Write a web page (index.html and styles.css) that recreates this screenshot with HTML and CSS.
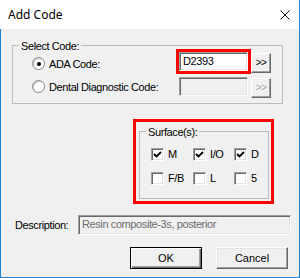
FILE: index.html
```html
<!DOCTYPE html>
<html lang="en">
<head>
    <meta charset="UTF-8">
    <title>Add Code</title>
    <link rel="stylesheet" href="styles.css">
</head>
<body>
    <div class="window">
        <div class="titlebar">
            <span class="title">Add Code</span>
            <svg class="close" width="10" height="10" viewBox="0 0 10 10">
                <path d="M0.5 0.5 L9.5 9.5 M9.5 0.5 L0.5 9.5" stroke="#000" stroke-width="1" fill="none"/>
            </svg>
        </div>

        <div class="client">
            <fieldset class="group select-group">
                <legend>Select Code:</legend>
                <div class="code-rows">
                    <div class="code-row">
                        <label class="option"><span class="radio checked"></span>ADA Code:</label>
                        <span class="mark"><span class="textbox">D2393</span></span>
                        <button class="more">&gt;&gt;</button>
                    </div>
                    <div class="code-row">
                        <label class="option"><span class="radio"></span>Dental Diagnostic Code:</label>
                        <span class="mark off"><span class="textbox disabled"></span></span>
                        <button class="more" disabled>&gt;&gt;</button>
                    </div>
                </div>
            </fieldset>

            <div class="mark surface-mark">
                <fieldset class="group surface-group">
                    <legend>Surface(s):</legend>
                    <div class="checks">
                        <label class="check"><span class="box checked"></span>M</label>
                        <label class="check"><span class="box checked"></span>I/O</label>
                        <label class="check"><span class="box checked"></span>D</label>
                        <label class="check"><span class="box"></span>F/B</label>
                        <label class="check"><span class="box"></span>L</label>
                        <label class="check"><span class="box"></span>5</label>
                    </div>
                </fieldset>
            </div>

            <div class="desc-row">
                <span class="desc-label">Description:</span>
                <span class="textbox wide">Resin composite-3s, posterior</span>
            </div>

            <div class="buttons">
                <button class="btn default">OK</button>
                <button class="btn">Cancel</button>
            </div>
        </div>
    </div>
</body>
</html>
```

FILE: styles.css
```css
* {
    box-sizing: border-box;
}

body {
    margin: 0;
    font-family: "Liberation Sans", Arial, sans-serif;
    font-size: 11px;
    letter-spacing: -0.4px;
    color: #000;
}

.window {
    width: 300px;
    height: 278px;
    display: flex;
    flex-direction: column;
    background-color: #fff;
    border-right: 1px solid #1883d7;
    border-bottom: 1px solid #1883d7;
}

.titlebar {
    height: 29px;
    display: flex;
    align-items: center;
    justify-content: space-between;
    padding: 0 9px 0 8px;
    background-color: #fff;
}

.title {
    font-family: "Noto Sans", sans-serif;
    font-size: 12px;
    letter-spacing: 0;
}

.close {
    display: block;
}

.client {
    flex: 1;
    background-color: #f0f0f0;
    border-left: 1px solid #1883d7;
    padding-top: 9px;
}

/* group boxes */
.group {
    margin: 0;
    padding: 0;
    min-width: 0;
    border: 1px solid #bcbcbc;
}

.group legend {
    margin-left: 6px;
    padding: 3px 2px 0;
    line-height: 11px;
}

.select-group {
    margin-left: 11px;
    width: 271px;
}

.code-rows {
    margin-top: -3px;
    padding: 0 11px 4px 19px;
}

.code-row {
    display: flex;
    align-items: center;
    height: 25px;
}

.option {
    flex: 1;
    display: flex;
    align-items: center;
}

.code-row:first-child .option {
    padding-top: 4px;
}

.radio {
    width: 13px;
    height: 13px;
    margin-right: 4px;
    border-radius: 50%;
    background-color: #fff;
    border: 1px solid #888;
    box-shadow: inset 1px 1px #c8c8c8;
    display: flex;
    align-items: center;
    justify-content: center;
}

.radio.checked::after {
    content: "";
    width: 4px;
    height: 4px;
    border-radius: 50%;
    background-color: #000;
}

/* red annotation frames */
.mark {
    display: block;
    border: 3px solid #f00;
}

.mark.off {
    border-color: transparent;
}

.textbox {
    display: block;
    width: 69px;
    height: 19px;
    padding: 2px 3px;
    line-height: 13px;
    background-color: #fff;
    border: 1px solid;
    border-color: #a0a0a0 #fff #fff #a0a0a0;
    box-shadow: inset 1px 1px #696969, inset -1px -1px #e3e3e3;
    white-space: nowrap;
}

.textbox.disabled {
    background-color: #f0f0f0;
}

.more {
    width: 20px;
    height: 20px;
    margin-top: 2px;
    padding: 0;
    font: inherit;
    font-size: 10px;
    letter-spacing: -0.5px;
    color: #000;
    background-color: #f0f0f0;
    border: 1px solid;
    border-color: #fff #696969 #696969 #fff;
    box-shadow: inset -1px -1px #a0a0a0;
}

.more:disabled {
    color: #a0a0a0;
    text-shadow: 1px 1px #fff;
}

/* surfaces */
.surface-mark {
    width: 141px;
    margin: 15px 0 0 132px;
    padding: 2px 2px 2px 3px;
}

.checks {
    display: grid;
    grid-template-columns: 42px 41px auto;
    grid-auto-rows: 24px;
    align-items: center;
    padding: 4px 0 8px 11px;
}

.check {
    display: flex;
    align-items: center;
}

.box {
    width: 13px;
    height: 13px;
    margin-right: 4px;
    background-color: #fff;
    border: 1px solid;
    border-color: #a0a0a0 #fff #fff #a0a0a0;
    box-shadow: inset 1px 1px #696969, inset -1px -1px #e3e3e3;
}

.box.checked {
    background: #fff url("data:image/svg+xml,%3Csvg xmlns='http://www.w3.org/2000/svg' width='11' height='11'%3E%3Cpath d='M2 5 L4.5 7.5 L9 3' stroke='%23000' stroke-width='1.8' fill='none'/%3E%3C/svg%3E") no-repeat center;
}

/* description */
.desc-row {
    display: flex;
    align-items: center;
    height: 20px;
    margin-top: 11px;
    padding-left: 14px;
}

.desc-label {
    width: 63px;
}

.textbox.wide {
    width: 213px;
    height: 20px;
    color: #6d6d6d;
    background-color: #f0f0f0;
}

/* dialog buttons */
.buttons {
    display: flex;
    justify-content: flex-end;
    gap: 14px;
    margin-top: 12px;
    padding-right: 11px;
}

.btn {
    width: 72px;
    height: 22px;
    padding: 0;
    font: inherit;
    color: #000;
    background-color: #f0f0f0;
    border: 1px solid;
    border-color: #fff #696969 #696969 #fff;
    box-shadow: inset -1px -1px #a0a0a0, inset 1px 1px #e3e3e3;
}

.btn.default {
    border-color: #000;
    box-shadow: inset 1px 1px #fff, inset -1px -1px #696969, inset -2px -2px #a0a0a0;
}
```
